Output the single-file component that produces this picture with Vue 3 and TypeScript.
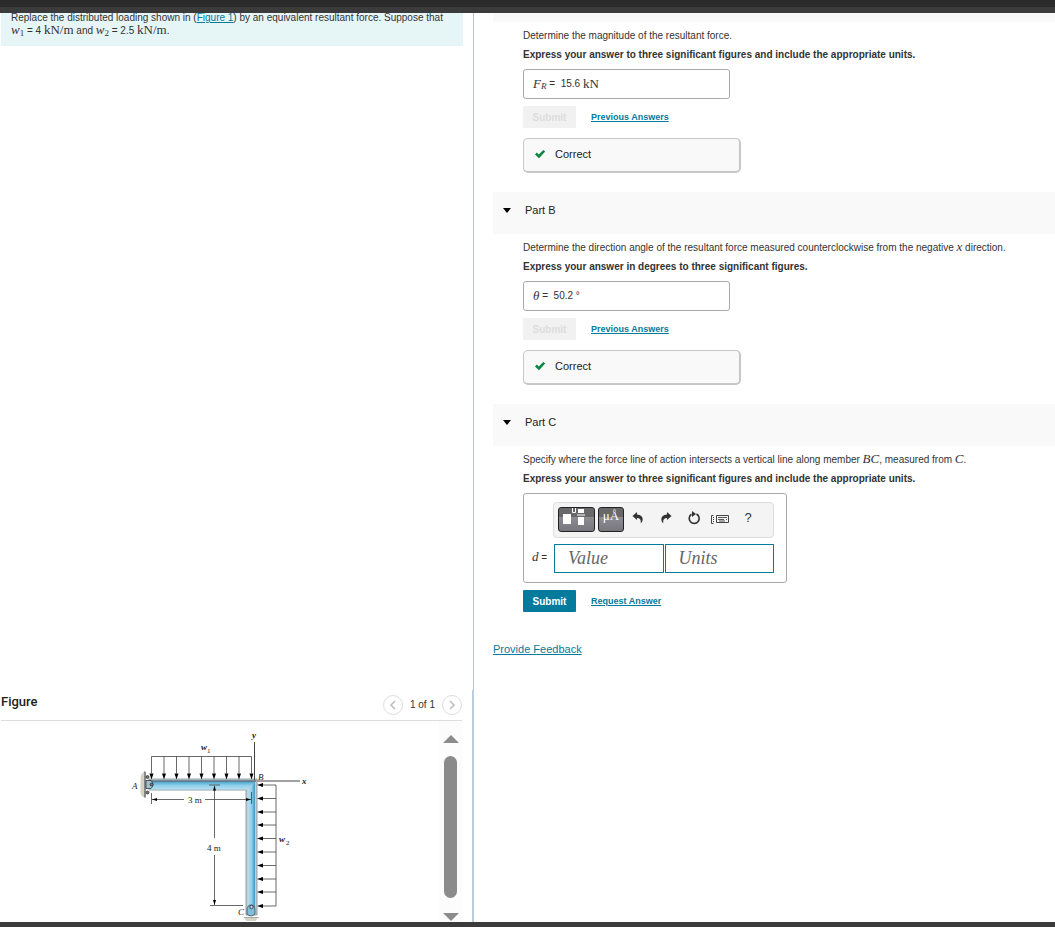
<script setup lang="ts">
import { ref } from 'vue'

const value = ref('')
const units = ref('')
const downArrows = [151.5, 164, 176.5, 189, 201.5, 214, 226.5, 239, 251.5]
const leftArrows = [785, 798.5, 812, 825, 838.5, 852, 865.5, 879, 892, 906]
</script>

<template>
  <div class="page">
    <div class="topbar"></div>
    <main class="columns">
      <section class="left">
        <div class="prompt">
          <p>
            Replace the distributed loading shown in (<a href="#figure">Figure 1</a>) by an equivalent resultant force. Suppose that
            <br /><i class="m">w</i><sub>1</sub> = 4 <span class="m">kN/m</span> and <i class="m">w</i><sub>2</sub> = 2.5 <span class="m">kN/m</span>.
          </p>
        </div>
        <div id="figure" class="figure">
          <header class="fig-head">
            <h2>Figure</h2>
            <nav class="pager" aria-label="Figures">
              <button type="button" aria-label="Previous figure">
                <svg width="8" height="10" viewBox="0 0 8 10"><path d="M6 1 2 5l4 4" /></svg>
              </button>
              <span>1 of 1</span>
              <button type="button" aria-label="Next figure">
                <svg width="8" height="10" viewBox="0 0 8 10"><path d="M2 1l4 4-4 4" /></svg>
              </button>
            </nav>
          </header>
          <div class="fig-body">
            <svg class="diagram" width="439" height="201" viewBox="0 721 439 201" role="img" aria-label="L-shaped beam ABC with distributed loads">
              <defs>
                <linearGradient id="beamH" x1="0" y1="0" x2="0" y2="1">
                  <stop offset="0" stop-color="#4aa3cc" />
                  <stop offset="0.5" stop-color="#8fd0ea" />
                  <stop offset="1" stop-color="#b4e0f2" />
                </linearGradient>
                <linearGradient id="beamV" x1="0" y1="0" x2="1" y2="0">
                  <stop offset="0" stop-color="#b4e0f2" />
                  <stop offset="0.5" stop-color="#8fd0ea" />
                  <stop offset="1" stop-color="#3d96c0" />
                </linearGradient>
              </defs>
              <path d="M144.500 771.500q-4 2-4 7v13q0 5 4 6z" fill="#d5d2c3" />
              <path d="M145 771.500v26" stroke="#444" stroke-width="1.200" />
              <path d="M149 779h108v136h-11v-125h-97z" fill="#c3d0d6" stroke="#7e8a90" stroke-width="0.800" />
              <path d="M149 781.500h106l-8 8h-98z" fill="url(#beamH)" />
              <path d="M255 781.500v132h-7v-124z" fill="url(#beamV)" />
              <path d="M149 781h107" stroke="#345" stroke-width="1.200" />
              <g fill="#777" stroke="#222" stroke-width="0.700">
                <circle cx="147.500" cy="777" r="1.500" />
                <circle cx="147.500" cy="792.500" r="1.500" />
                <path d="M146 780.500h5q4 4 0 8h-5z" fill="#9fc3d3" />
                <circle cx="151.500" cy="784.500" r="1.500" />
              </g>
              <path d="M254.500 742v38M257 781h43" class="axis" />
              <path d="M151.500 756.500h100M276 785v121" class="thin" />
              <g v-for="x in downArrows" :key="'d' + x">
                <path :d="`M${x} 756.500v17`" class="thin" />
                <path :d="`M${x - 2} 773.500h4l-2 6z`" />
              </g>
              <g v-for="y in leftArrows" :key="'l' + y">
                <path :d="`M276 ${y}h-14`" class="thin" />
                <path :d="`M263 ${y - 2}v4l-6-2z`" />
              </g>
              <path class="thin" d="M151.500 793v11M251.500 792v12M152 799.500h32M205 799.500h46M209 785h11M210 905.500h33M214.500 786v52M214.500 855v50" />
              <path d="M152 799.500l5-1.500v3zM251 799.500l-5-1.500v3zM214.500 785.500l-1.500 5h3zM214.500 905l-1.500-5h3z" />
              <path d="M243.500 917h15l-3 4h-9z" fill="#d5d2c3" />
              <path d="M244 917.500h15" stroke="#999" stroke-width="0.700" />
              <path d="M247 914v-4q0-5 4-5t4 5v4q-4 4-8 0z" fill="#80bdd8" stroke="#345" stroke-width="0.700" />
              <circle cx="251.500" cy="907" r="1.700" fill="#cde" stroke="#222" stroke-width="0.800" />
              <g class="it">
                <text x="252" y="738" class="bold">y</text>
                <text x="302" y="784" class="bold">x</text>
                <text x="201" y="750" class="bold">w</text>
                <text x="279" y="842" class="bold">w</text>
                <text x="132" y="789">A</text>
                <text x="258" y="780">B</text>
                <text x="238" y="915">C</text>
              </g>
              <g class="up">
                <text x="207" y="753" class="sm">1</text>
                <text x="286" y="845" class="sm">2</text>
                <text x="188" y="803">3 m</text>
                <text x="207" y="851">4 m</text>
              </g>
            </svg>
            <div class="scroller" aria-hidden="true">
              <i class="tri up-tri"></i>
              <i class="thumb"></i>
              <i class="tri down-tri"></i>
            </div>
          </div>
        </div>
      </section>

      <section class="right">
        <div class="strip"></div>
        <div class="part">
          <p>Determine the magnitude of the resultant force.</p>
          <p class="b">Express your answer to three significant figures and include the appropriate units.</p>
          <div class="answer"><i class="m">F</i><sub><i>R</i></sub><span>&nbsp;=&nbsp; 15.6&nbsp;</span><span class="m">kN</span></div>
          <div class="actions">
            <button type="button" class="submit" disabled>Submit</button>
            <a href="#previous-a">Previous Answers</a>
          </div>
          <div class="correct">
            <svg width="12" height="10" viewBox="0 0 12 10"><path d="M1 5.500 2.800 3.600 4.800 5.400 9.300 1 11.200 2.500 5 9.200z" /></svg>
            Correct
          </div>
        </div>

        <h3 class="part-head">
          <svg width="8" height="5" viewBox="0 0 8 5"><path d="M0 0h8L4 5z" /></svg>
          Part B
        </h3>
        <div class="part">
          <p>Determine the direction angle of the resultant force measured counterclockwise from the negative <i class="m">x</i> direction.</p>
          <p class="b">Express your answer in degrees to three significant figures.</p>
          <div class="answer"><i class="m">θ</i><span>&nbsp;=&nbsp; 50.2 °</span></div>
          <div class="actions">
            <button type="button" class="submit" disabled>Submit</button>
            <a href="#previous-b">Previous Answers</a>
          </div>
          <div class="correct">
            <svg width="12" height="10" viewBox="0 0 12 10"><path d="M1 5.500 2.800 3.600 4.800 5.400 9.300 1 11.200 2.500 5 9.200z" /></svg>
            Correct
          </div>
        </div>

        <h3 class="part-head">
          <svg width="8" height="5" viewBox="0 0 8 5"><path d="M0 0h8L4 5z" /></svg>
          Part C
        </h3>
        <div class="part">
          <p>Specify where the force line of action intersects a vertical line along member <i class="m">BC</i>, measured from <i class="m">C</i>.</p>
          <p class="b">Express your answer to three significant figures and include the appropriate units.</p>
          <form class="editor" @submit.prevent>
            <div class="tools">
              <button type="button" class="dark wide" aria-label="Templates">
                <svg width="35" height="24" viewBox="0 0 35 24">
                  <path d="M4 6h8v10H4zM19 1h6v4h-6zM19 9h6v8h-6z" fill="#fff" />
                  <path d="M13.500 0v4.500h3V0M18 7h8" fill="none" stroke="#fff" />
                </svg>
              </button>
              <button type="button" class="dark" aria-label="Units">μÅ</button>
              <button type="button" class="tool" aria-label="Undo">
                <svg width="12" height="12" viewBox="0 0 12 12"><path d="M5 0 0.500 4l4.500 4V6c3 0 4.200 1.500 3.700 5.500 3.500-3.500 2.500-8.500-3.700-9z" /></svg>
              </button>
              <button type="button" class="tool" aria-label="Redo">
                <svg width="12" height="12" viewBox="0 0 12 12"><path d="M7 0l4.500 4L7 8V6c-3 0-4.200 1.500-3.700 5.500-3.500-3.500-2.500-8.500 3.700-9z" /></svg>
              </button>
              <button type="button" class="tool" aria-label="Reset">
                <svg width="14" height="14" viewBox="0 0 14 14"><path d="M4.500 3.200A5 5 0 1 0 9.500 3" fill="none" stroke="#333" stroke-width="1.600" /><path d="M5 0l4 3-4 3z" /></svg>
              </button>
              <button type="button" class="tool keys" aria-label="Keyboard shortcuts">
                <svg width="18" height="10" viewBox="0 0 18 10">
                  <path d="M2.500 1.500h-2v8h2M5.500 1.500h12v7h-12z" fill="none" stroke="#444" />
                  <path d="M7 3.500h9M7 5.500h6M15 5.500h1M8 7h6" fill="none" stroke="#444" stroke-width="0.900" />
                  <path d="M2.500 3v5" stroke="#444" stroke-dasharray="1 1" />
                </svg>
              </button>
              <button type="button" class="tool help" aria-label="Help">?</button>
            </div>
            <div class="entry">
              <label for="val"><i class="m">d</i> =</label>
              <input id="val" v-model="value" type="text" placeholder="Value" />
              <input v-model="units" type="text" placeholder="Units" aria-label="Units" />
            </div>
          </form>
          <div class="actions">
            <button type="button" class="submit">Submit</button>
            <a href="#request">Request Answer</a>
          </div>
        </div>
        <a class="feedback" href="#feedback">Provide Feedback</a>
      </section>
    </main>
    <div class="bottombar"></div>
  </div>
</template>

<style>
body {
  background: #fff;
}
</style>

<style scoped>
* {
  box-sizing: border-box;
}
.page {
  display: flex;
  flex-direction: column;
  min-height: 100vh;
  font: 10px/19px "Liberation Sans", Arial, sans-serif;
  color: #333;
}
.topbar {
  height: 13px;
  background: #3b3b3b;
  border-top: 7px solid #2b2b2b;
}
.bottombar {
  height: 5px;
  background: #3b3b3b;
}
.columns {
  flex: 1;
  display: grid;
  grid-template-columns: 474px minmax(0, 1fr);
}
p,
h2,
h3 {
  margin: 0;
}
a {
  color: #047a9c;
}
button {
  font-family: inherit;
  padding: 0;
  border: 0;
  background: none;
}
.m {
  font-family: "Liberation Serif", serif;
  font-size: 13px;
  line-height: 12px;
}
sub {
  font: 9px/8px "Liberation Serif", serif;
  vertical-align: -2px;
}
.left {
  display: flex;
  flex-direction: column;
  justify-content: space-between;
  background: linear-gradient(#bcc3cf, #bcc3cf) right / 1px 100% no-repeat;
}
.prompt {
  height: 33px;
  margin: 0 11px 0 1px;
  padding: 0 10px;
  background: #e6f5f6;
  line-height: 12px;
}
.prompt p {
  margin-top: -1px;
  white-space: nowrap;
}
.figure {
  border-right: 2px solid #b8cce0;
  padding: 0 10px 0 1px;
}
.fig-head {
  display: flex;
  justify-content: space-between;
  height: 31px;
  border-bottom: 1px solid #ddd;
}
.fig-head h2 {
  font: 500 13px/24px Roboto, sans-serif;
  color: #222;
}
.pager {
  display: flex;
  gap: 7px;
  height: 30px;
  align-items: center;
}
.pager span {
  line-height: 32px;
}
.pager button {
  display: grid;
  place-items: center;
  width: 20px;
  height: 20px;
  border: 1px solid #ddd;
  border-radius: 50%;
}
.pager path {
  fill: none;
  stroke: #bbb;
  stroke-width: 1.5;
}
.fig-body {
  display: flex;
  justify-content: space-between;
}
.diagram {
  display: block;
  margin-left: -1px;
}
.thin,
.axis {
  fill: none;
  stroke: #444;
  stroke-width: 0.8;
}
.axis {
  stroke-width: 1;
}
.it,
.up {
  font: italic 9px "Liberation Serif", serif;
  fill: #222;
}
.up {
  font-style: normal;
}
.bold {
  font-weight: bold;
}
.sm {
  font-size: 7px;
}
.scroller {
  width: 23px;
  padding: 14px 0 1px;
  display: flex;
  flex-direction: column;
  align-items: center;
  background: #fcfcfc;
}
.tri {
  border: 8px solid transparent;
  border-top-width: 0;
  border-bottom: 8px solid #8b8b8b;
}
.down-tri {
  border-width: 8px 8px 0;
  border-top-color: #8b8b8b;
}
.thumb {
  flex: 1;
  width: 13px;
  margin: 13px 0 15px;
  border-radius: 7px;
  background: #8b8b8b;
}
.right {
  padding-left: 19px;
}
.strip {
  height: 9px;
  background: #f9f9f9;
}
.part {
  padding: 4px 0 0 30px;
}
.b {
  font-weight: bold;
}
.part-head {
  display: flex;
  align-items: center;
  gap: 14px;
  height: 42px;
  margin-top: 19px;
  padding: 0 10px 6px;
  background: #f9f9f9;
  font-size: 11px;
  font-weight: normal;
  color: #222;
}
.answer {
  display: flex;
  align-items: center;
  width: 207px;
  height: 30px;
  margin-top: 5px;
  padding: 0 9px 1px;
  border: 1px solid #aaa;
  border-radius: 3px;
}
.answer sub {
  padding-top: 5px;
}
.actions {
  display: flex;
  gap: 15px;
  height: 22px;
  margin-top: 7px;
  font-size: 9px;
  font-weight: bold;
  line-height: 22px;
}
.submit {
  width: 53px;
  border-radius: 1px;
  background: #047a9c;
  color: #fff;
  font-size: 10px;
  font-weight: bold;
}
.submit:disabled {
  background: #f1f1f1;
  color: #ddd;
}
.correct {
  display: flex;
  align-items: center;
  gap: 9px;
  width: 218px;
  height: 35px;
  margin-top: 10px;
  padding: 0 10px 2px;
  border: 1px solid #c7c7c7;
  border-width: 1px 2px 2px 1px;
  border-radius: 5px;
  background: #f9f9f9;
  font-size: 11px;
  color: #222;
}
.correct path {
  fill: #0a8641;
}
.editor {
  width: 264px;
  height: 90px;
  margin-top: 5px;
  padding: 8px 12px 0 8px;
  border: 1px solid #aaa;
  border-radius: 3px;
}
.tools {
  display: flex;
  align-items: flex-start;
  height: 36px;
  margin-left: 21px;
  padding: 4px;
  border: 1px solid #ddd;
  border-radius: 4px;
  background: #f4f4f4;
}
.dark {
  width: 26px;
  height: 25px;
  border: 1px solid #222;
  border-radius: 3px;
  background: linear-gradient(#68686a 0 38%, #8b8b92 40%, #77777d);
  color: #fff;
  font: 13px/15px "Liberation Serif", serif;
  display: flex;
  justify-content: center;
}
.wide {
  width: 37px;
  margin-right: 3px;
}
.tool {
  display: grid;
  place-items: center;
  width: 28px;
  height: 21px;
  color: #333;
}
.tool path {
  fill: #333;
}
.tool path[fill="none"] {
  fill: none;
}
.keys {
  width: 23px;
  height: 24px;
}
.help {
  width: 34px;
  font-size: 13px;
}
.entry {
  display: flex;
  gap: 1px;
  margin-top: 6px;
}
.entry label {
  width: 21px;
  line-height: 28px;
  white-space: nowrap;
}
.entry input {
  flex: 1;
  min-width: 0;
  height: 29px;
  padding: 0 13px;
  border: 1px solid #047a9c;
  border-radius: 0;
  font: italic 18px "Liberation Serif", serif;
  background: #fff;
}
.entry input::placeholder {
  color: #666;
  opacity: 1;
}
.feedback {
  display: inline-block;
  margin-top: 28px;
  font-size: 11px;
}
</style>
